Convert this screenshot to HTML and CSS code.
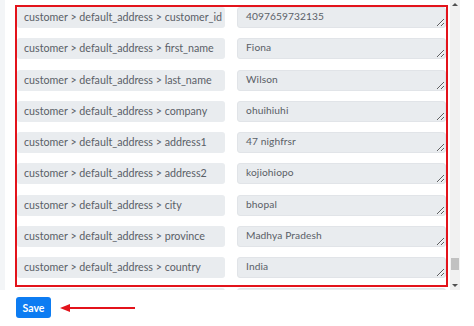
FILE: index.html
```html
<!DOCTYPE html>
<html lang="en">
<head>
    <meta charset="UTF-8">
    <title>Field mapping</title>
    <link rel="stylesheet" href="styles.css">
</head>
<body>
    <div class="scroll-box">
        <div class="mapping-list">
            <div class="map-row"><div class="map-key">customer &gt; default_address &gt; customer_id</div><textarea class="map-value" readonly>4097659732135</textarea></div>
            <div class="map-row"><div class="map-key">customer &gt; default_address &gt; first_name</div><textarea class="map-value" readonly>Fiona</textarea></div>
            <div class="map-row"><div class="map-key">customer &gt; default_address &gt; last_name</div><textarea class="map-value" readonly>Wilson</textarea></div>
            <div class="map-row"><div class="map-key">customer &gt; default_address &gt; company</div><textarea class="map-value" readonly>ohuihiuhi</textarea></div>
            <div class="map-row"><div class="map-key">customer &gt; default_address &gt; address1</div><textarea class="map-value" readonly>47 nighfrsr</textarea></div>
            <div class="map-row"><div class="map-key">customer &gt; default_address &gt; address2</div><textarea class="map-value" readonly>kojiohiopo</textarea></div>
            <div class="map-row"><div class="map-key">customer &gt; default_address &gt; city</div><textarea class="map-value" readonly>bhopal</textarea></div>
            <div class="map-row"><div class="map-key">customer &gt; default_address &gt; province</div><textarea class="map-value" readonly>Madhya Pradesh</textarea></div>
            <div class="map-row"><div class="map-key">customer &gt; default_address &gt; country</div><textarea class="map-value" readonly>India</textarea></div>
            <div class="map-row"><div class="map-key"></div><textarea class="map-value" readonly></textarea></div>
        </div>
        <div class="fake-scrollbar">
            <span class="arrow-up"></span>
            <span class="track"><span class="thumb"></span></span>
            <span class="arrow-down"></span>
        </div>
        <div class="highlight"></div>
    </div>
    <div class="actions">
        <button class="btn-save">Save</button>
        <svg class="pointer" width="76" height="10" viewBox="0 0 76 10">
            <line x1="8" y1="5" x2="75" y2="5" stroke="#e3131b" stroke-width="2"/>
            <polygon points="0,5 10,1 10,9" fill="#e3131b"/>
        </svg>
    </div>
</body>
</html>
```

FILE: styles.css
```css
body, html {
    margin: 0;
    background-color: #ffffff;
    font-family: Lato, "Open Sans", sans-serif;
    color: #5a6067;
}
body {
    width: 474px;
    height: 326px;
    overflow: hidden;
}
.scroll-box {
    position: relative;
    display: flex;
    width: 460px;
    height: 290px;
    background-color: #ffffff;
    border-left: 5px solid #f3f5f7;
    box-sizing: border-box;
}
.mapping-list {
    flex: 1;
    overflow: hidden;
    padding: 7px 0 0 12px;
}
.map-row {
    display: flex;
    gap: 12px;
    height: 21px;
    margin-bottom: 10.25px;
}
.map-key {
    width: 208px;
    height: 21px;
    box-sizing: border-box;
    padding: 0 7px;
    line-height: 20px;
    font-size: 10.7px;
    background-color: #e9ecef;
    border-radius: 3px;
    white-space: nowrap;
    overflow: hidden;
}
.map-value {
    width: 209px;
    height: 21px;
    box-sizing: border-box;
    margin: 0;
    padding: 2px 8px;
    border: 1px solid #e1e4e8;
    border-radius: 3px;
    background-color: #e9ecef;
    color: #5a6067;
    font-family: Lato, "Open Sans", sans-serif;
    font-size: 10.2px;
    letter-spacing: 0.1px;
    line-height: 13px;
    overflow: hidden;
    resize: vertical;
}
.map-value:focus {
    outline: none;
}
.fake-scrollbar {
    width: 10px;
    display: flex;
    flex-direction: column;
    align-items: center;
    background-color: #f1f1f1;
}
.arrow-up, .arrow-down {
    width: 0;
    height: 0;
    margin: 3px 0;
    border-left: 3px solid transparent;
    border-right: 3px solid transparent;
}
.arrow-up {
    border-bottom: 3px solid #505050;
}
.arrow-down {
    border-top: 3px solid #505050;
}
.track {
    flex: 1;
    width: 100%;
    display: flex;
    flex-direction: column;
    justify-content: flex-end;
    align-items: center;
    padding-bottom: 11px;
}
.thumb {
    width: 8px;
    height: 12px;
    background-color: #c1c1c1;
}
.highlight {
    position: absolute;
    left: 10px;
    top: 5px;
    width: 433px;
    height: 282px;
    box-sizing: border-box;
    border: 2px solid #e3131b;
}
.actions {
    display: flex;
    align-items: center;
    gap: 9px;
    padding: 7px 0 0 16px;
}
.btn-save {
    width: 35px;
    height: 21px;
    padding: 0;
    border: none;
    border-radius: 3px;
    background-color: #0d7cf2;
    color: #ffffff;
    font-family: Lato, "Open Sans", sans-serif;
    font-size: 10.5px;
    font-weight: bold;
}
```
